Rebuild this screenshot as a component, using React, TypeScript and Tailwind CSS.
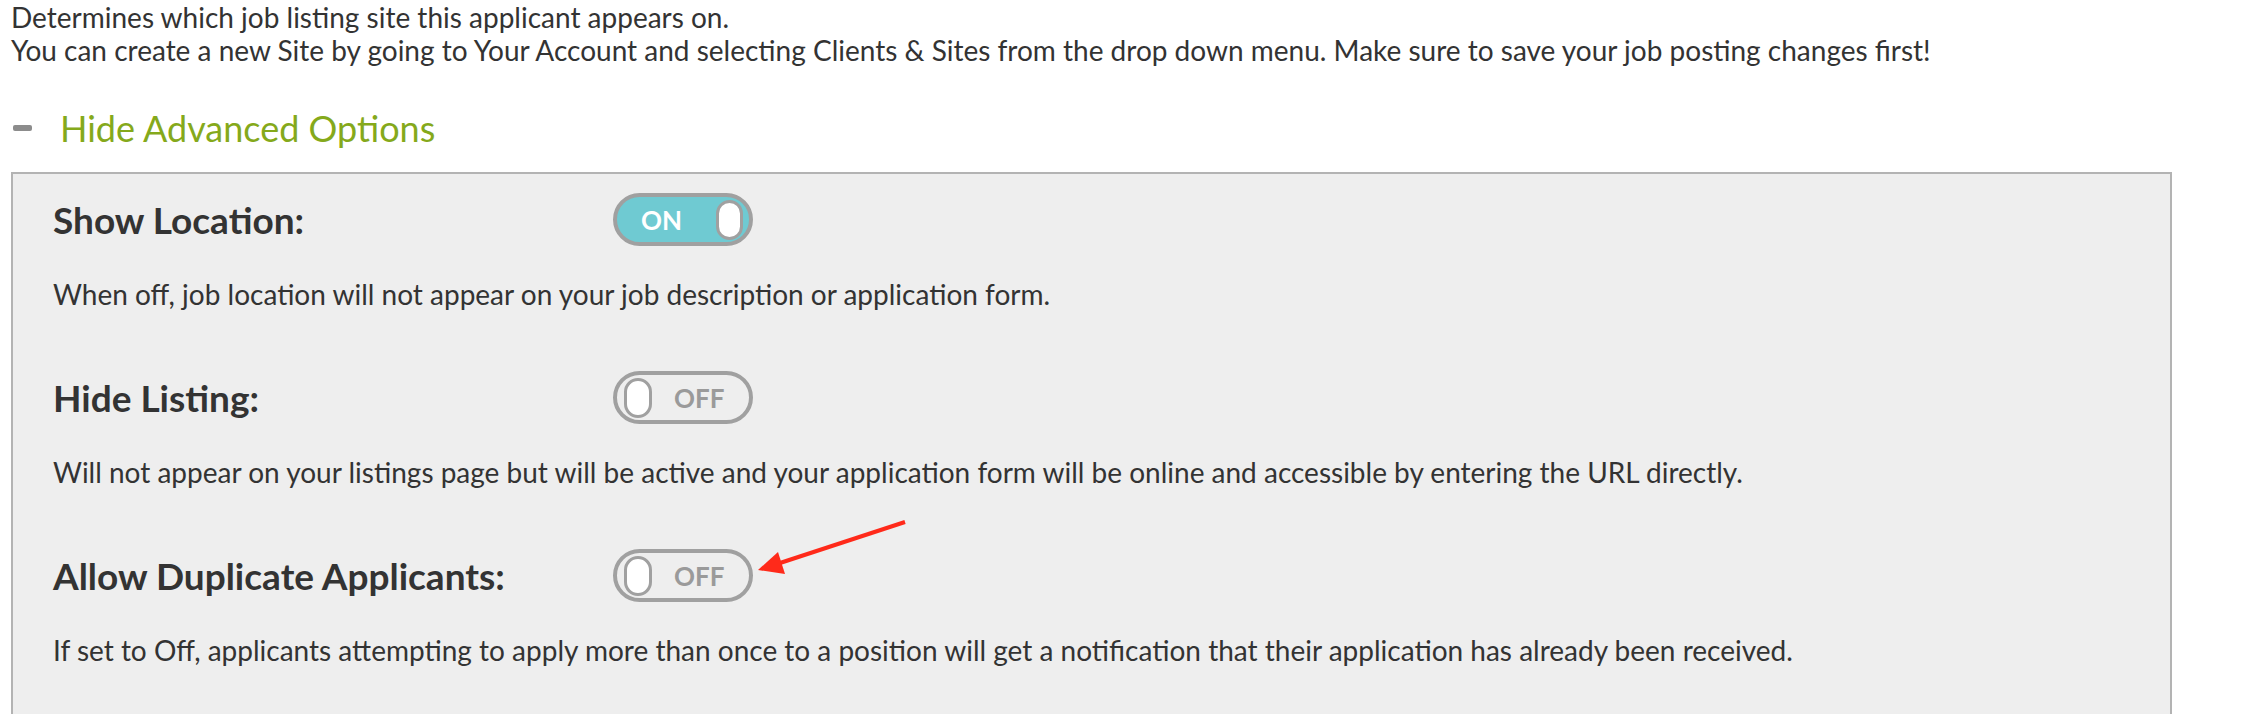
import React from "react";

interface OptionRowProps {
  label: string;
  description: string;
  on: boolean;
  showArrow?: boolean;
}

const Toggle = ({ on }: { on: boolean }) => {
  if (on) {
    return (
      <div className="flex h-[53px] w-[140px] items-center justify-between rounded-full border-[4px] border-[#a0a0a0] bg-[#6fcad2] pl-[24px] pr-[6px]">
        <span className="text-[26px] font-bold leading-none text-white">ON</span>
        <span className="h-[40px] w-[27px] rounded-full border-[3px] border-[#a0a0a0] bg-white" />
      </div>
    );
  }
  return (
    <div className="flex h-[53px] w-[140px] items-center rounded-full border-[4px] border-[#a0a0a0] bg-[#eeeeee] pl-[7px]">
      <span className="h-[40px] w-[28px] rounded-full border-[3px] border-[#a0a0a0] bg-white" />
      <span className="ml-[22px] text-[26px] font-bold leading-none text-[#9a9a9a]">OFF</span>
    </div>
  );
};

const OptionRow = ({ label, description, on, showArrow }: OptionRowProps) => (
  <div>
    <div className="flex h-[53px] items-center">
      <div className="w-[560px] text-[37px] font-bold text-[#333333]">{label}</div>
      <div className="relative">
        <Toggle on={on} />
        {/* red annotation arrow */}
        {showArrow && (
          <svg
            className="absolute left-[142px] top-[-30px]"
            width="160"
            height="70"
            viewBox="0 0 160 70"
          >
            <line x1="150" y1="3" x2="25" y2="44" stroke="#ff2a1a" strokeWidth="4" />
            <polygon points="3,51 23,33 30,55" fill="#ff2a1a" />
          </svg>
        )}
      </div>
    </div>
    <p className="mt-[32px] text-[28px] leading-[32px] text-[#333333]">{description}</p>
  </div>
);

const App = () => {
  return (
    <div className="h-[714px] w-[2242px] overflow-hidden bg-white font-['Lato',sans-serif] text-[#333333]">
      <div className="pl-[11px] pt-[1px] text-[28px] leading-[33px]">
        <p>Determines which job listing site this applicant appears on.</p>
        <p>
          You can create a new Site by going to Your Account and selecting Clients &amp; Sites from the drop down menu. Make sure to save your job posting changes first!
        </p>
      </div>

      <div className="mt-[39px] flex h-[44px] items-center pl-[13px]">
        <span className="h-[6px] w-[19px] rounded-[2px] bg-[#8c8c8c]" />
        <span className="ml-[28px] text-[36px] text-[#85a91b]">Hide Advanced Options</span>
      </div>

      <div className="ml-[11px] mt-[22px] w-[2161px] border-2 border-b-0 border-[#b3b3b3] bg-[#eeeeee] pb-[60px] pl-[40px] pt-[19px]">
        <div className="flex flex-col gap-[61px]">
          <OptionRow
            label="Show Location:"
            description="When off, job location will not appear on your job description or application form."
            on
          />
          <OptionRow
            label="Hide Listing:"
            description="Will not appear on your listings page but will be active and your application form will be online and accessible by entering the URL directly."
            on={false}
          />
          <OptionRow
            label="Allow Duplicate Applicants:"
            description="If set to Off, applicants attempting to apply more than once to a position will get a notification that their application has already been received."
            on={false}
            showArrow
          />
        </div>
      </div>
    </div>
  );
};

export default App;
